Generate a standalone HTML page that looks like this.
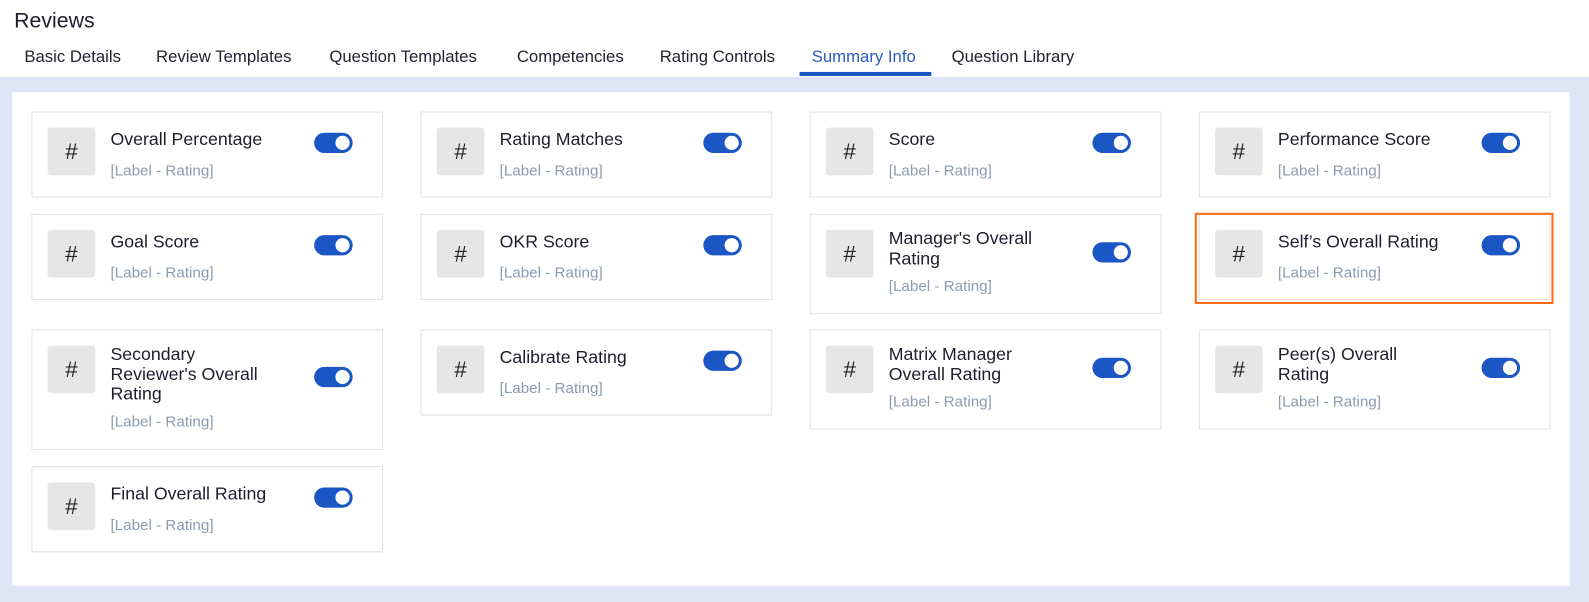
<!DOCTYPE html>
<html><head><meta charset="utf-8">
<style>
*{box-sizing:border-box;margin:0;padding:0}
html,body{width:1589px;height:602px;overflow:hidden}
body{background:#dce6f6;font-family:"Liberation Sans",sans-serif;color:#1d1d2b}
#w{position:absolute;left:0;top:0;width:1568px;height:594px;transform:scale(1.01339);transform-origin:0 0}
.top{position:absolute;left:0;top:0;width:1568px;height:76px;background:#fff}
.h{position:absolute;left:14px;top:9px;font-size:21px;color:#1d1d2b}
.tab{position:absolute;top:47px;font-size:16.5px;color:#23232f;white-space:nowrap}
.tab.on{color:#2a5bc4}
.ul{position:absolute;left:789px;top:71px;width:130px;height:4px;background:#1a56c4}
.panel{position:absolute;left:12px;top:91px;width:1537px;height:487px;background:#fff}
.card{position:absolute;width:347px;border:1px solid #e2e2e2;background:#fff;padding:15px 16px 12px 15px;display:flex}
.ic{width:47px;height:47px;background:#e6e6e6;border-radius:3px;display:flex;align-items:center;justify-content:center;font-size:22px;color:#222;flex:none;margin-bottom:10px}
.tx{margin-left:15px;margin-top:-1px}
.row{display:flex;align-items:center}
.t{width:196px;font-size:17.5px;line-height:19.5px;color:#1d1d2b;white-space:nowrap}
.s{margin-top:9px;font-size:15px;line-height:18px;color:#8c9bb0;white-space:nowrap}
.tg{width:38px;height:20px;border-radius:10px;background:#1a56c4;position:relative;margin-top:6px;margin-left:5px}
.tg:after{content:"";position:absolute;right:3px;top:3px;width:14px;height:14px;border-radius:50%;background:#fff}
.hl{position:absolute;left:1179px;top:210px;width:354px;height:90px;border:2px solid #ff6a13}
</style></head><body><div id="w">
<div class="top"></div>
<div class="h">Reviews</div>
<div class="tab" style="left:24px">Basic Details</div>
<div class="tab" style="left:154px">Review Templates</div>
<div class="tab" style="left:325px">Question Templates</div>
<div class="tab" style="left:510px">Competencies</div>
<div class="tab" style="left:651px">Rating Controls</div>
<div class="tab on" style="left:801px">Summary Info</div>
<div class="tab" style="left:939px">Question Library</div>
<div class="ul"></div>
<div class="panel"></div>

<div class="card" style="left:31px;top:110px;height:85px"><div class="ic">#</div><div class="tx"><div class="row"><div class="t">Overall Percentage</div><div class="tg"></div></div><div class="s">[Label - Rating]</div></div></div>
<div class="card" style="left:415px;top:110px;height:85px"><div class="ic">#</div><div class="tx"><div class="row"><div class="t">Rating Matches</div><div class="tg"></div></div><div class="s">[Label - Rating]</div></div></div>
<div class="card" style="left:799px;top:110px;height:85px"><div class="ic">#</div><div class="tx"><div class="row"><div class="t">Score</div><div class="tg"></div></div><div class="s">[Label - Rating]</div></div></div>
<div class="card" style="left:1183px;top:110px;height:85px"><div class="ic">#</div><div class="tx"><div class="row"><div class="t">Performance Score</div><div class="tg"></div></div><div class="s">[Label - Rating]</div></div></div>

<div class="card" style="left:31px;top:211px;height:85px"><div class="ic">#</div><div class="tx"><div class="row"><div class="t">Goal Score</div><div class="tg"></div></div><div class="s">[Label - Rating]</div></div></div>
<div class="card" style="left:415px;top:211px;height:85px"><div class="ic">#</div><div class="tx"><div class="row"><div class="t">OKR Score</div><div class="tg"></div></div><div class="s">[Label - Rating]</div></div></div>
<div class="card" style="left:799px;top:211px;height:99px"><div class="ic">#</div><div class="tx"><div class="row"><div class="t">Manager's Overall<br>Rating</div><div class="tg"></div></div><div class="s">[Label - Rating]</div></div></div>
<div class="card" style="left:1183px;top:211px;height:85px"><div class="ic">#</div><div class="tx"><div class="row"><div class="t">Self’s Overall Rating</div><div class="tg"></div></div><div class="s">[Label - Rating]</div></div></div>
<div class="hl"></div>

<div class="card" style="left:31px;top:325px;height:119px"><div class="ic">#</div><div class="tx"><div class="row"><div class="t">Secondary<br>Reviewer's Overall<br>Rating</div><div class="tg"></div></div><div class="s">[Label - Rating]</div></div></div>
<div class="card" style="left:415px;top:325px;height:85px"><div class="ic">#</div><div class="tx"><div class="row"><div class="t">Calibrate Rating</div><div class="tg"></div></div><div class="s">[Label - Rating]</div></div></div>
<div class="card" style="left:799px;top:325px;height:99px"><div class="ic">#</div><div class="tx"><div class="row"><div class="t">Matrix Manager<br>Overall Rating</div><div class="tg"></div></div><div class="s">[Label - Rating]</div></div></div>
<div class="card" style="left:1183px;top:325px;height:99px"><div class="ic">#</div><div class="tx"><div class="row"><div class="t">Peer(s) Overall<br>Rating</div><div class="tg"></div></div><div class="s">[Label - Rating]</div></div></div>

<div class="card" style="left:31px;top:460px;height:85px"><div class="ic">#</div><div class="tx"><div class="row"><div class="t">Final Overall Rating</div><div class="tg"></div></div><div class="s">[Label - Rating]</div></div></div>
</div></body></html>
